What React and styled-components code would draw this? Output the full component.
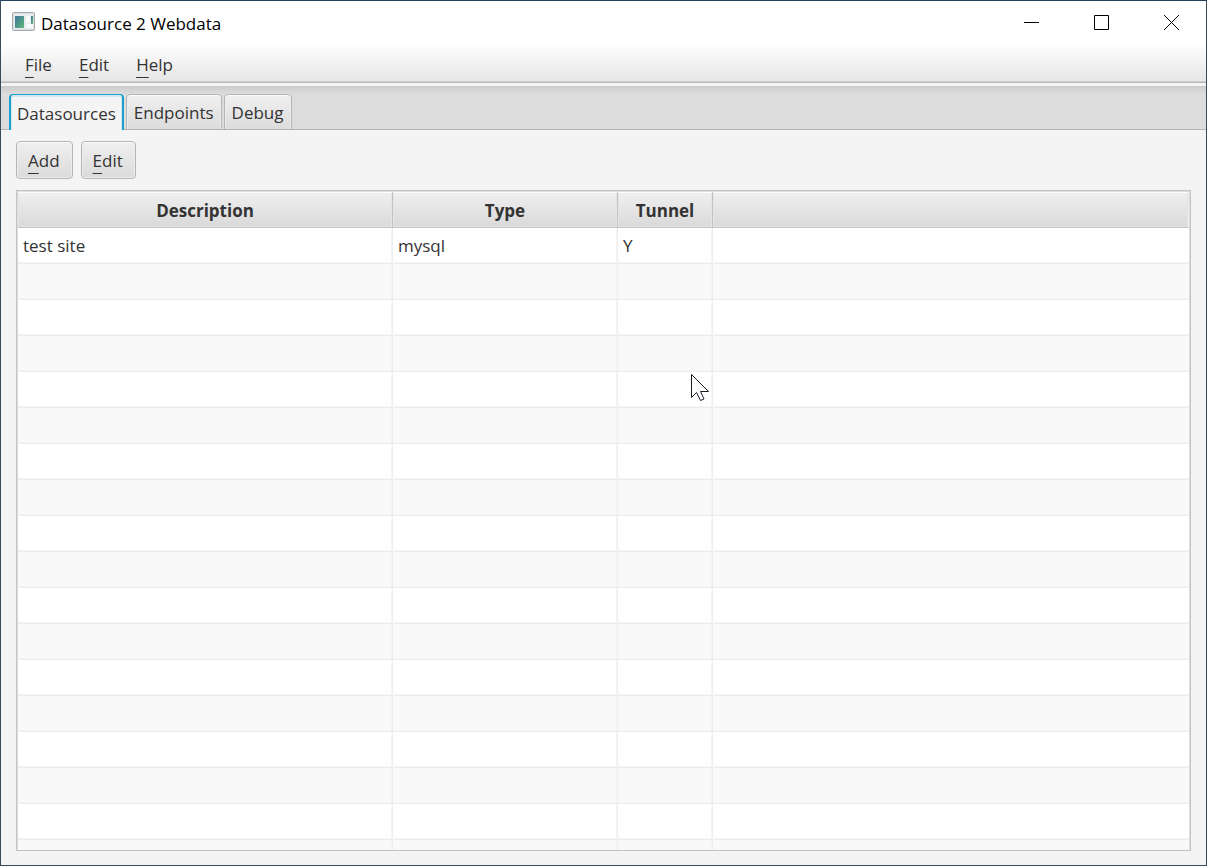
import React, { useState } from "react";
import styled, { createGlobalStyle } from "styled-components";

const menus = ["File", "Edit", "Help"];
const tabs = ["Datasources", "Endpoints", "Debug"];
const datasources = [{ description: "test site", type: "mysql", tunnel: "Y" }];
const emptyRows = Array.from({ length: 17 }, (_, i) => i);

const Mnemonic = ({ text }) => (
  <span>
    <Underlined>{text[0]}</Underlined>
    {text.slice(1)}
  </span>
);

const App = () => {
  const [active, setActive] = useState("Datasources");

  return (
    <>
      <GlobalStyle />
      <Window>
        <TitleBar>
          <AppIcon />
          <Title>Datasource 2 Webdata</Title>
          <WindowButton type="button" aria-label="Minimize">
            <svg width="15" height="15" stroke="#000" fill="none">
              <path d="M0 7.5H15" />
            </svg>
          </WindowButton>
          <WindowButton type="button" aria-label="Maximize">
            <svg width="15" height="15" stroke="#000" fill="none">
              <path d="M.5 .5H14.5V14.5H.5Z" />
            </svg>
          </WindowButton>
          <WindowButton type="button" aria-label="Close">
            <svg width="15" height="15" stroke="#000" fill="none">
              <path d="M0 0L15 15M15 0L0 15" />
            </svg>
          </WindowButton>
        </TitleBar>
        <MenuBar>
          {menus.map((menu) => (
            <MenuButton type="button" key={menu}>
              <Mnemonic text={menu} />
            </MenuButton>
          ))}
        </MenuBar>
        <TabHeader role="tablist">
          {tabs.map((tab) => (
            <Tab
              type="button"
              role="tab"
              key={tab}
              aria-selected={tab === active}
              $active={tab === active}
              onClick={() => setActive(tab)}
            >
              {tab}
            </Tab>
          ))}
        </TabHeader>
        <Content>
          <Toolbar>
            <Button type="button">
              <Mnemonic text="Add" />
            </Button>
            <Button type="button">
              <Mnemonic text="Edit" />
            </Button>
          </Toolbar>
          <TableView>
            <Table>
              <colgroup>
                <Col $width={375} />
                <Col $width={225} />
                <Col $width={95} />
                <col />
              </colgroup>
              <thead>
                <tr>
                  <HeaderCell>Description</HeaderCell>
                  <HeaderCell>Type</HeaderCell>
                  <HeaderCell>Tunnel</HeaderCell>
                  <HeaderCell as="td" />
                </tr>
              </thead>
              <tbody>
                {datasources.map((row) => (
                  <Row key={row.description}>
                    <Cell>{row.description}</Cell>
                    <Cell>{row.type}</Cell>
                    <Cell>{row.tunnel}</Cell>
                    <Cell />
                  </Row>
                ))}
                {emptyRows.map((i) => (
                  <Row key={i}>
                    <Cell />
                    <Cell />
                    <Cell />
                    <Cell />
                  </Row>
                ))}
              </tbody>
            </Table>
          </TableView>
        </Content>
        <Pointer width="20" height="29" viewBox="0 0 20 29">
          <path
            d="M.5 .5V23.5L5.5 18.5L9.5 26.5L13 25L9.5 17.5H17.5Z"
            fill="#fff"
            stroke="#1c1c24"
          />
        </Pointer>
      </Window>
    </>
  );
};

const AppIcon = () => (
  <IconSvg width="23" height="19" viewBox="0 0 23 19">
    <defs>
      <linearGradient id="screen" x1="0" y1="0" x2="1" y2="1">
        <stop offset="0" stopColor="#3f74a0" />
        <stop offset="1" stopColor="#5fb878" />
      </linearGradient>
    </defs>
    <rect x=".5" y=".5" width="22" height="18" rx="1" fill="#e9ebec" stroke="#a3a9ae" />
    <rect x="1.5" y="1.5" width="20" height="16" fill="none" stroke="#dcdfe1" />
    <rect x="3" y="4" width="9" height="12" fill="url(#screen)" />
    <rect x="14" y="4" width="4" height="7" fill="#f8f8f8" />
    <rect x="14" y="12" width="7" height="4" fill="#f8f8f8" />
    <rect x="19" y="4" width="2" height="8" fill="url(#screen)" />
  </IconSvg>
);

export default App;

const GlobalStyle = createGlobalStyle`
  * {
    box-sizing: border-box;
  }
  body {
    margin: 0;
    color: #333;
    font-family: "Open Sans", "Noto Sans", sans-serif;
    font-size: 17px;
    line-height: 24px;
  }
  button {
    font: inherit;
    color: inherit;
  }
`;

const Window = styled.div`
  position: relative;
  display: flex;
  flex-direction: column;
  height: 100vh;
  border: 1px solid #3c4a58;
  border-top-color: #24405f;
  background: #f4f4f4;
  overflow: hidden;
`;

const TitleBar = styled.header`
  display: flex;
  align-items: flex-start;
  height: 45px;
  padding-left: 11px;
  background: #fff;
  color: #000;
`;

const IconSvg = styled.svg`
  margin-top: 11px;
`;

const Title = styled.span`
  flex: 1;
  margin-left: 6px;
  line-height: 45px;
`;

const WindowButton = styled.button`
  display: flex;
  align-items: center;
  justify-content: center;
  width: 70px;
  height: 43px;
  padding: 0;
  border: 0;
  background: none;
`;

const MenuBar = styled.nav`
  display: flex;
  align-items: center;
  gap: 1px;
  height: 37px;
  padding: 2px 11px 0;
  border-bottom: 1px solid #b5b5b5;
  box-shadow: inset 0 -1px #d2d2d2;
  background: linear-gradient(#fdfdfd, #e5e5e5);
`;

const MenuButton = styled.button`
  padding: 0 13px;
  border: 0;
  background: none;
`;

const Underlined = styled.span`
  text-decoration: underline;
  text-decoration-thickness: 1px;
  text-decoration-skip-ink: none;
  text-underline-offset: 6px;
`;

const TabHeader = styled.div`
  display: flex;
  align-items: flex-end;
  gap: 2px;
  height: 44px;
  margin-top: 3px;
  padding: 0 8px;
  background: linear-gradient(#cbcbcb, #dcdcdc 8px);
  box-shadow: inset 0 -1px #b5b5b5;
`;

const Tab = styled.button`
  height: 36px;
  padding: 2px 7px 0;
  border: 1px solid #b5b5b5;
  border-radius: 4px 4px 0 0;
  background: linear-gradient(#f0f0f0, #dcdcdc);
  box-shadow: inset 0 1px #fbfbfb, inset 1px 0 #ececec, inset -1px 0 #ececec;

  ${({ $active }) =>
    $active &&
    `
    padding: 2px 6px 0;
    border: 2px solid #1a9fce;
    border-top-width: 1px;
    border-bottom: 0;
    background: #f4f4f4;
    box-shadow: inset 0 2px #d3e9f0, inset 1px 0 #d3e9f0, inset -1px 0 #d3e9f0;
  `}
`;

const Content = styled.main`
  flex: 1;
  display: flex;
  flex-direction: column;
  gap: 11px;
  min-height: 0;
  padding: 11px 15px 14px;
`;

const Toolbar = styled.div`
  display: flex;
  gap: 8px;
`;

const Button = styled.button`
  height: 38px;
  padding: 1px 12px 0 11px;
  border: 1px solid #b5b5b5;
  border-radius: 4px;
  background: linear-gradient(#f0f0f0, #dadada);
  box-shadow: inset 0 1px #fcfcfc, inset 0 0 0 1px #ececec;
`;

const TableView = styled.div`
  flex: 1;
  min-height: 0;
  border: 1px solid #c3c3c3;
  box-shadow: inset 0 0 0 1px #dedede;
  padding: 1px;
  overflow: hidden;
  contain: paint;
`;

const Table = styled.table`
  width: 100%;
  table-layout: fixed;
  border-collapse: separate;
  border-spacing: 0;
  background: #fff;
`;

const Col = styled.col`
  width: ${({ $width }) => $width}px;
`;

const HeaderCell = styled.th`
  height: 36px;
  padding: 2px 0 0;
  border-right: 1px solid #c3c3c3;
  border-bottom: 1px solid #c3c3c3;
  background: linear-gradient(#f0f0f0, #d9d9d9);
  box-shadow: inset 0 1px #fcfcfc, inset 0 0 0 1px #e4e4e4;
  font-weight: 700;
  text-align: center;

  &:last-child {
    border-right-color: #ececec;
  }
`;

const Row = styled.tr`
  &:nth-child(even) {
    background: #f9f9f9;
  }
`;

const Cell = styled.td`
  height: 36px;
  padding: 0 5px;
  border-right: 1px solid #ededed;
  border-bottom: 1px solid #ededed;
  box-shadow: inset -1px -1px #f5f5f5;

  &:last-child {
    border-right: 0;
    box-shadow: inset 0 -1px #f5f5f5;
  }
`;

const Pointer = styled.svg`
  position: absolute;
  left: 690px;
  top: 373px;
  pointer-events: none;
`;
